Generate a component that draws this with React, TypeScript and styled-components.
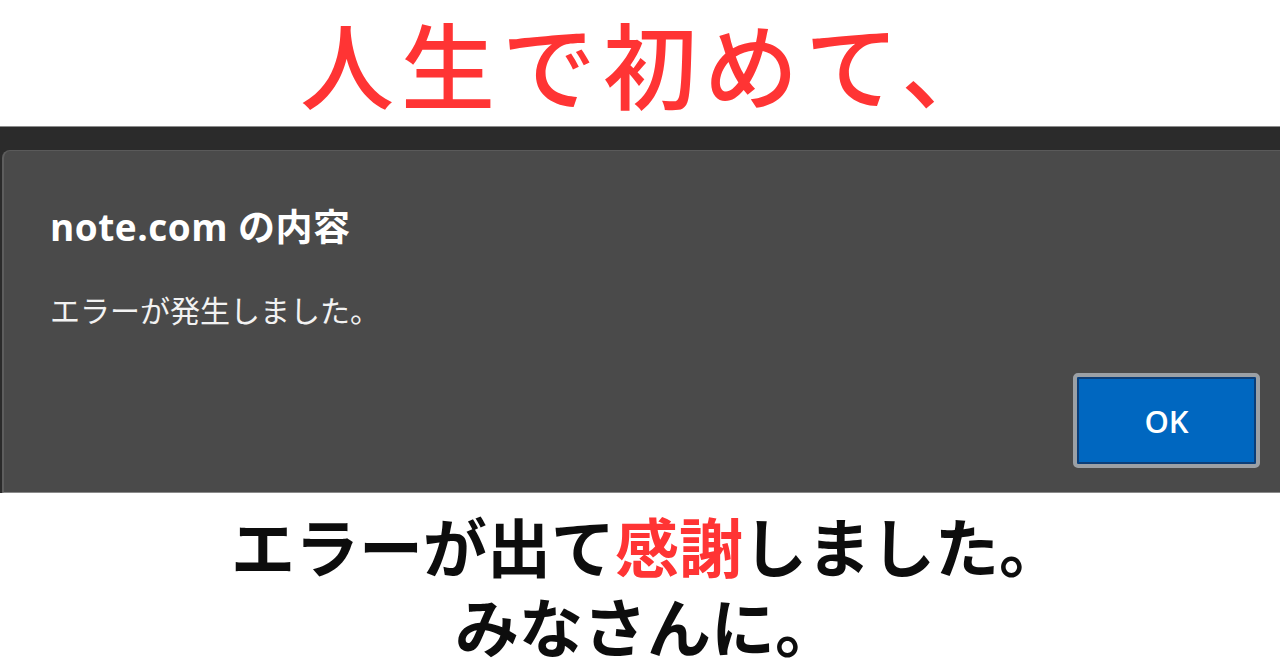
import React from 'react';
import styled, { createGlobalStyle } from 'styled-components';

const GlobalStyle = createGlobalStyle`
  html, body {
    margin: 0;
    padding: 0;
    background: #ffffff;
  }
  body {
    font-family: "Noto Sans CJK JP", "Noto Sans", sans-serif;
  }
`;

const Page = styled.div`
  width: 1280px;
  height: 670px;
  overflow: hidden;
  display: flex;
  flex-direction: column;
  background: #ffffff;
`;

const Headline = styled.h1`
  margin: 0;
  height: 126px;
  box-sizing: border-box;
  padding-left: 300px;
  font-family: "Noto Sans CJK JP", sans-serif;
  font-weight: 500;
  font-size: 94px;
  line-height: 124px;
  letter-spacing: 7px;
  color: #ff3434;
  white-space: nowrap;
`;

const Window = styled.div`
  display: flex;
  flex-direction: column;
  border-top: 1px solid #8c8c8c;
  background: #2b2b2b;
`;

const TitleStrip = styled.div`
  height: 23px;
`;

const Dialog = styled.div`
  margin-left: 2px;
  height: 343px;
  box-sizing: border-box;
  background: #4a4a4a;
  border-top: 1px solid #5a5a5a;
  border-left: 2px solid #5e5e5e;
  border-bottom: 1px solid #8a8a8a;
  border-top-left-radius: 8px;
  display: flex;
  flex-direction: column;
  padding: 51px 20px 0 46px;
`;

const DialogTitle = styled.div`
  font-family: "Open Sans", "Noto Sans CJK JP", sans-serif;
  font-weight: 700;
  font-size: 37px;
  line-height: 50px;
  letter-spacing: 0.5px;
  color: #ffffff;
`;

const DialogMessage = styled.div`
  margin-top: 36px;
  font-family: "Noto Sans CJK JP", sans-serif;
  font-size: 30px;
  line-height: 42px;
  color: #f2f2f2;
`;

const Actions = styled.div`
  margin-top: 43px;
  display: flex;
  justify-content: flex-end;
`;

const OkButton = styled.button`
  width: 187px;
  height: 95px;
  box-sizing: border-box;
  padding: 0;
  border: 4px solid #9ba0a5;
  border-radius: 5px;
  background: #0067c0;
  box-shadow: inset 0 0 0 2px #0b3e78;
  color: #ffffff;
  font-family: "Open Sans", "Noto Sans", sans-serif;
  font-weight: 600;
  font-size: 31px;
  cursor: pointer;
`;

const Caption = styled.div`
  flex: 1;
  display: flex;
  flex-direction: column;
  align-items: center;
  padding-top: 11px;
`;

const CaptionLine = styled.p`
  margin: 0;
  font-family: "Noto Sans CJK JP", sans-serif;
  font-weight: 700;
  font-size: 64px;
  line-height: 80px;
  color: #0d0d0d;
  white-space: nowrap;
  transform: translateX(7px);
`;

const Accent = styled.span`
  color: #ff3434;
`;

export default function App() {
  return (
    <Page>
      <GlobalStyle />
      <Headline>人生で初めて、</Headline>
      <Window>
        <TitleStrip />
        <Dialog>
          <DialogTitle>note.com の内容</DialogTitle>
          <DialogMessage>エラーが発生しました。</DialogMessage>
          <Actions>
            <OkButton type="button">OK</OkButton>
          </Actions>
        </Dialog>
      </Window>
      <Caption>
        <CaptionLine>
          エラーが出て<Accent>感謝</Accent>しました。
        </CaptionLine>
        <CaptionLine>みなさんに。</CaptionLine>
      </Caption>
    </Page>
  );
}
